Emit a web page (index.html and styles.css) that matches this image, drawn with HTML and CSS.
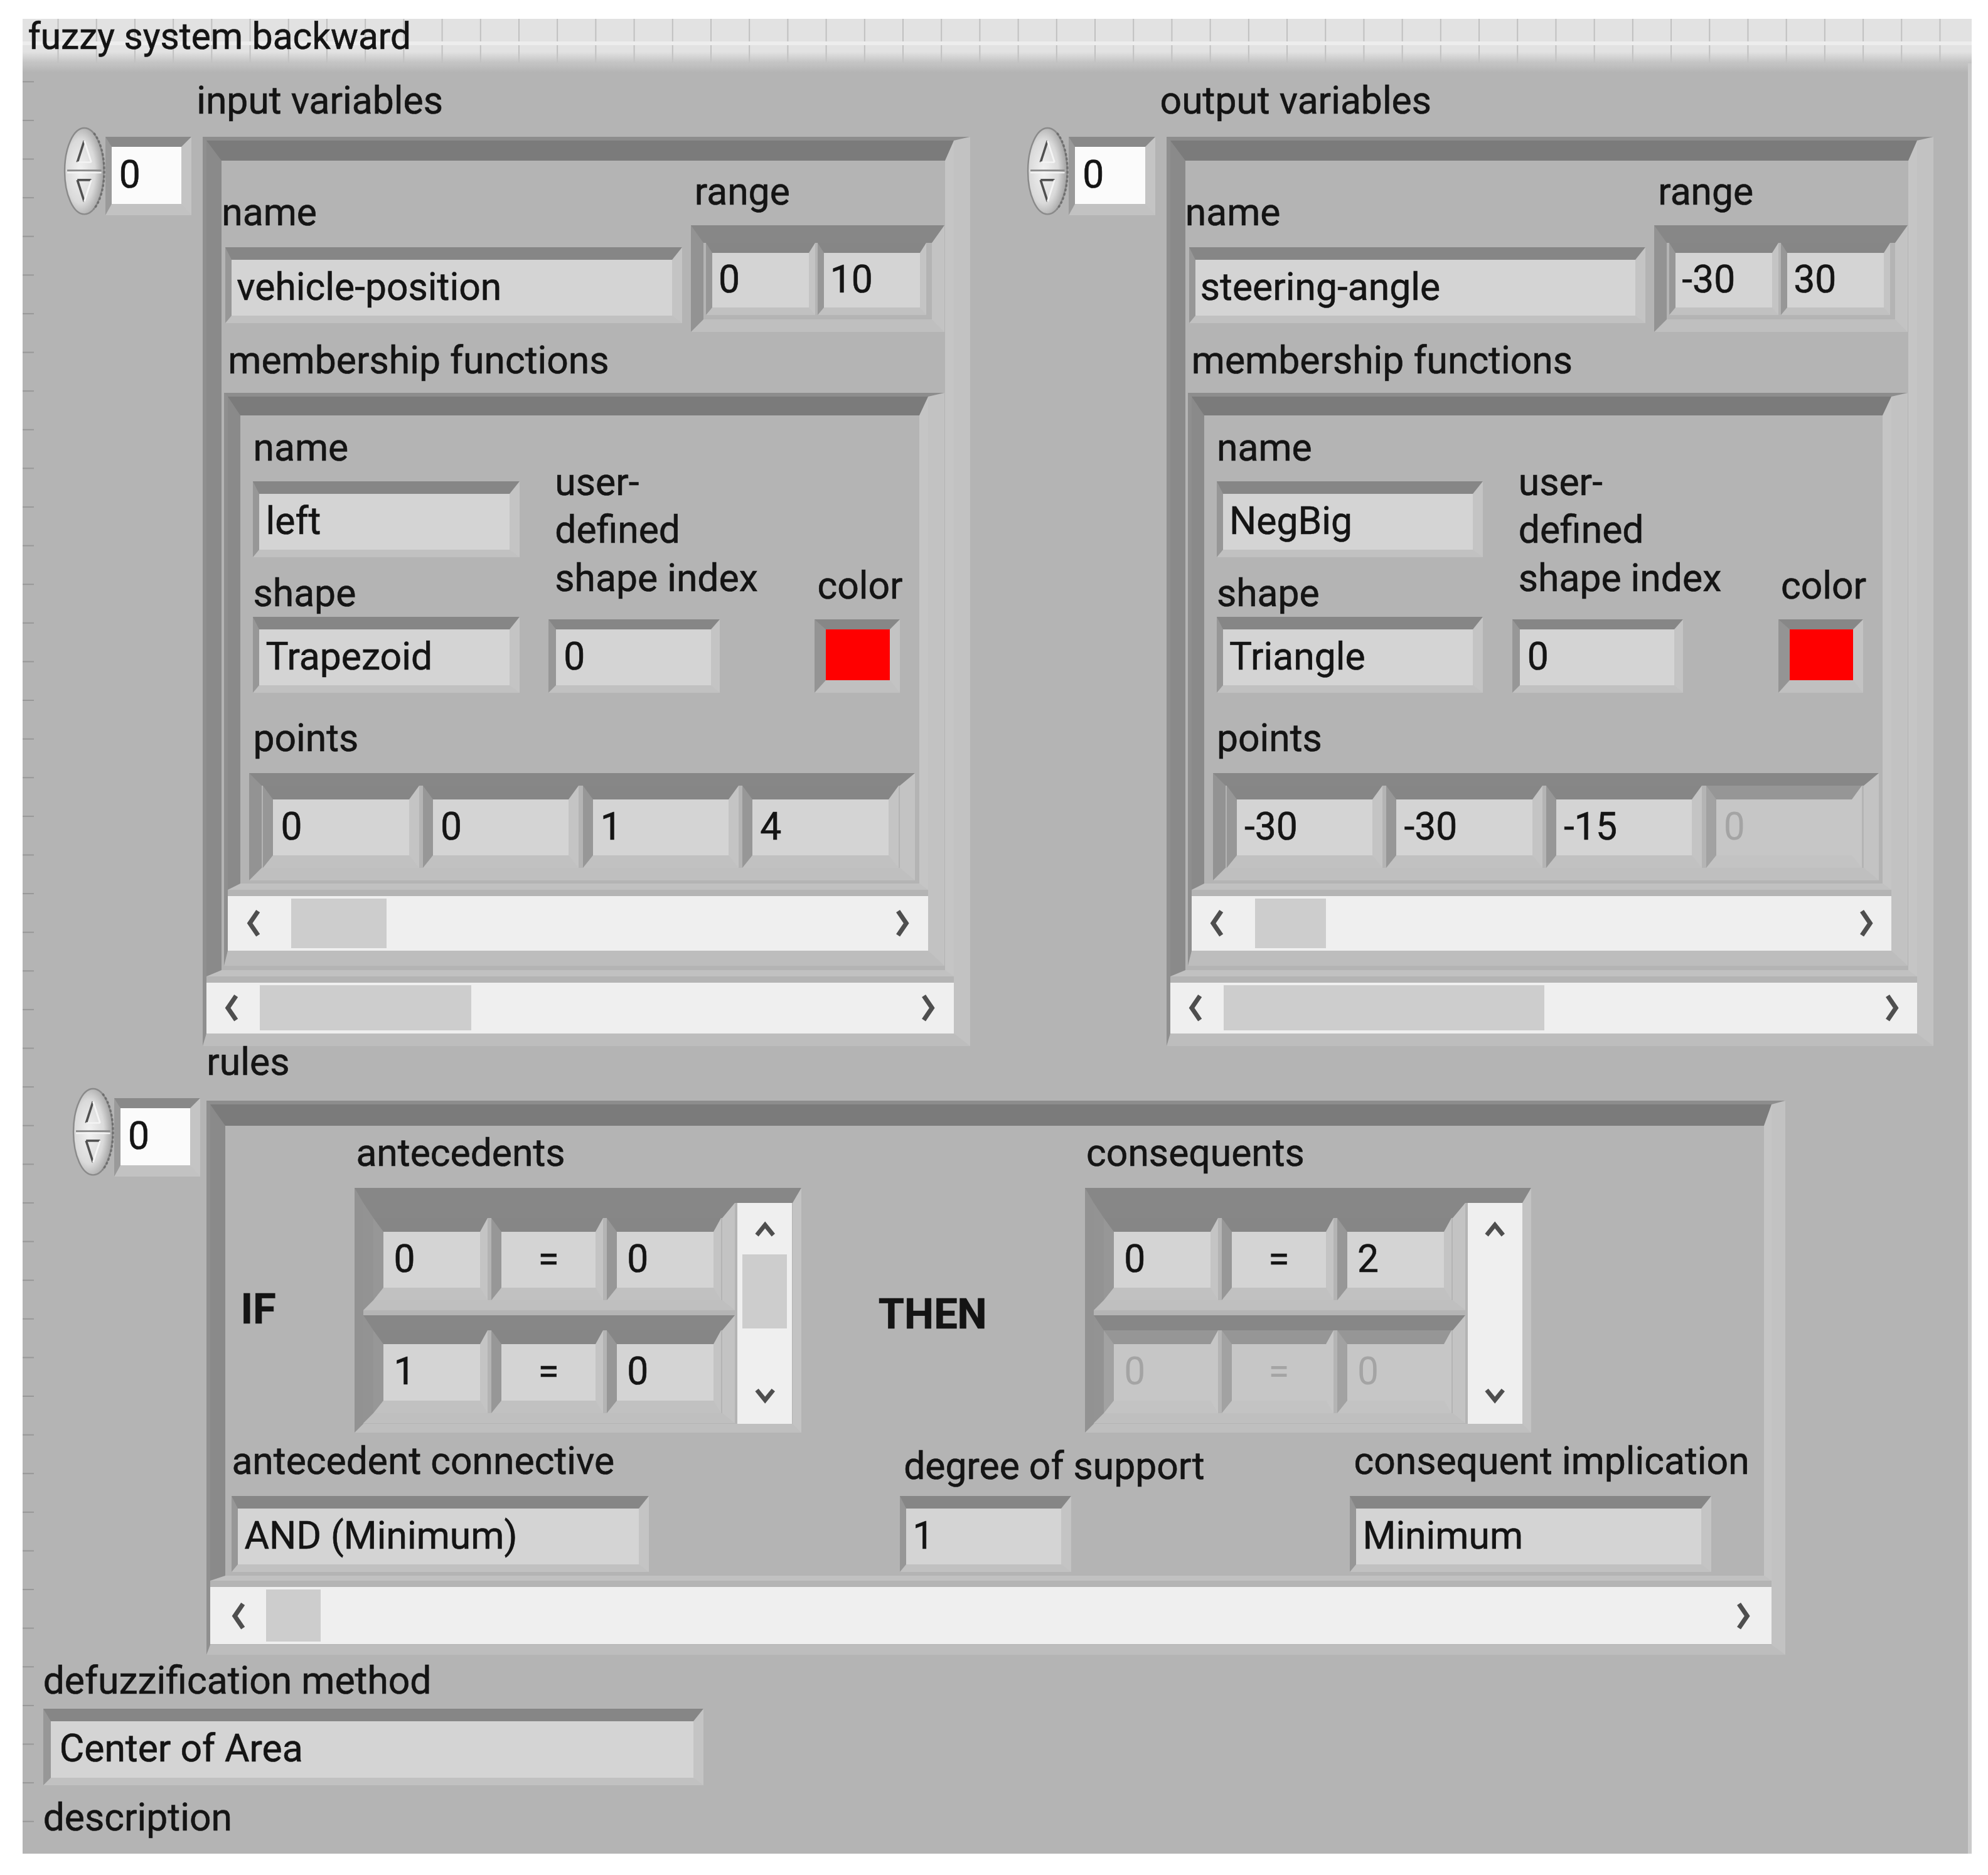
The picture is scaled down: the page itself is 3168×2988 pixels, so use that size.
FILE: index.html
```html
<!DOCTYPE html>
<html>
<head>
<meta charset="utf-8">
<title>fuzzy system backward</title>
<link rel="stylesheet" href="styles.css">
</head>
<body>
<div class="app">
 <div class="panel">
  <div class="strip"><div class="title">fuzzy system backward</div></div>
  <div class="body">
   <div class="vars">
    <!-- input variables -->
    <div class="group">
     <div class="idx">
      <svg class="spin" viewBox="0 0 33 70"><defs><radialGradient id="sg1" cx="40%" cy="50%" r="62%"><stop offset="0" stop-color="#f2f2f2"/><stop offset="0.6" stop-color="#dadada"/><stop offset="1" stop-color="#9a9a9a"/></radialGradient></defs><ellipse cx="16.5" cy="35" rx="15.5" ry="34" fill="url(#sg1)" stroke="#8a8a8a" stroke-width="1.2"/><path d="M24 5 A15.5 34 0 0 1 24 65" fill="none" stroke="#6e6e6e" stroke-width="1.6" stroke-dasharray="2 1.5"/><line x1="3" y1="34.5" x2="30" y2="34.5" stroke="#8a8a8a" stroke-width="1.4"/><line x1="3" y1="36.2" x2="30" y2="36.2" stroke="#f4f4f4" stroke-width="1"/><line x1="16.5" y1="11" x2="11" y2="28" stroke="#505050" stroke-width="1.8"/><line x1="16.5" y1="11" x2="22" y2="28" stroke="#f4f4f4" stroke-width="1.4"/><line x1="11" y1="28" x2="22" y2="28" stroke="#f4f4f4" stroke-width="1.2"/><line x1="11" y1="42" x2="22" y2="42" stroke="#505050" stroke-width="1.8"/><line x1="11" y1="42" x2="16.5" y2="59" stroke="#505050" stroke-width="1.8"/><line x1="22" y1="42" x2="16.5" y2="59" stroke="#f4f4f4" stroke-width="1.4"/></svg>
      <div class="num">0</div>
     </div>
     <div class="acol">
      <div class="lbl glbl">input variables</div>
      <div class="arr arr-var">
       <div class="elem elem-var">
        <div class="toprow">
         <div class="namecol">
          <div class="lbl lbl-name">name</div>
          <div class="sbox sbox-name">vehicle-position</div>
         </div>
         <div class="rangecol">
          <div class="lbl lbl-range">range</div>
          <div class="clus clus-range"><div class="sbox nbox-r">0</div><div class="sbox nbox-r">10</div></div>
         </div>
        </div>
        <div class="lbl lbl-mf">membership functions</div>
        <div class="arr arr-mf">
         <div class="elem elem-mf">
          <div class="mftop">
           <div class="mfcol1">
            <div class="lbl lbl-a">name</div>
            <div class="sbox sbox-mfn">left</div>
            <div class="lbl lbl-shape">shape</div>
            <div class="sbox sbox-mfn">Trapezoid</div>
           </div>
           <div class="mfcol2">
            <div class="lbl lbl-udsi">user-<br>defined<br>shape index</div>
            <div class="sbox nbox-si">0</div>
           </div>
           <div class="mfcol3">
            <div class="lbl lbl-color">color</div>
            <div class="colorbox"><div class="swatch"></div></div>
           </div>
          </div>
          <div class="lbl lbl-points">points</div>
          <div class="clus clus-points">
           <div class="sbox nbox-p">0</div><div class="sbox nbox-p">0</div><div class="sbox nbox-p">1</div><div class="sbox nbox-p">4</div>
          </div>
         </div>
         <div class="hs hs-mf">
          <svg class="chev" viewBox="0 0 14 24"><polyline points="10.5,2.5 4,12 10.5,21.5" fill="none" stroke="#4e4e4e" stroke-width="3.6"/></svg>
          <div class="thumb th-in-mf"></div><div class="sp"></div>
          <svg class="chev" viewBox="0 0 14 24"><polyline points="3.5,2.5 10,12 3.5,21.5" fill="none" stroke="#4e4e4e" stroke-width="3.6"/></svg>
         </div>
        </div>
       </div>
       <div class="hs hs-var">
        <svg class="chev" viewBox="0 0 14 24"><polyline points="10.5,2.5 4,12 10.5,21.5" fill="none" stroke="#4e4e4e" stroke-width="3.6"/></svg>
        <div class="thumb th-in-var"></div><div class="sp"></div>
        <svg class="chev" viewBox="0 0 14 24"><polyline points="3.5,2.5 10,12 3.5,21.5" fill="none" stroke="#4e4e4e" stroke-width="3.6"/></svg>
       </div>
      </div>
     </div>
    </div>
    <!-- output variables -->
    <div class="group">
     <div class="idx">
      <svg class="spin" viewBox="0 0 33 70"><defs><radialGradient id="sg2" cx="40%" cy="50%" r="62%"><stop offset="0" stop-color="#f2f2f2"/><stop offset="0.6" stop-color="#dadada"/><stop offset="1" stop-color="#9a9a9a"/></radialGradient></defs><ellipse cx="16.5" cy="35" rx="15.5" ry="34" fill="url(#sg2)" stroke="#8a8a8a" stroke-width="1.2"/><path d="M24 5 A15.5 34 0 0 1 24 65" fill="none" stroke="#6e6e6e" stroke-width="1.6" stroke-dasharray="2 1.5"/><line x1="3" y1="34.5" x2="30" y2="34.5" stroke="#8a8a8a" stroke-width="1.4"/><line x1="3" y1="36.2" x2="30" y2="36.2" stroke="#f4f4f4" stroke-width="1"/><line x1="16.5" y1="11" x2="11" y2="28" stroke="#505050" stroke-width="1.8"/><line x1="16.5" y1="11" x2="22" y2="28" stroke="#f4f4f4" stroke-width="1.4"/><line x1="11" y1="28" x2="22" y2="28" stroke="#f4f4f4" stroke-width="1.2"/><line x1="11" y1="42" x2="22" y2="42" stroke="#505050" stroke-width="1.8"/><line x1="11" y1="42" x2="16.5" y2="59" stroke="#505050" stroke-width="1.8"/><line x1="22" y1="42" x2="16.5" y2="59" stroke="#f4f4f4" stroke-width="1.4"/></svg>
      <div class="num">0</div>
     </div>
     <div class="acol">
      <div class="lbl glbl">output variables</div>
      <div class="arr arr-var">
       <div class="elem elem-var">
        <div class="toprow">
         <div class="namecol">
          <div class="lbl lbl-name">name</div>
          <div class="sbox sbox-name">steering-angle</div>
         </div>
         <div class="rangecol">
          <div class="lbl lbl-range">range</div>
          <div class="clus clus-range"><div class="sbox nbox-r">-30</div><div class="sbox nbox-r">30</div></div>
         </div>
        </div>
        <div class="lbl lbl-mf">membership functions</div>
        <div class="arr arr-mf">
         <div class="elem elem-mf">
          <div class="mftop">
           <div class="mfcol1">
            <div class="lbl lbl-a">name</div>
            <div class="sbox sbox-mfn">NegBig</div>
            <div class="lbl lbl-shape">shape</div>
            <div class="sbox sbox-mfn">Triangle</div>
           </div>
           <div class="mfcol2">
            <div class="lbl lbl-udsi">user-<br>defined<br>shape index</div>
            <div class="sbox nbox-si">0</div>
           </div>
           <div class="mfcol3">
            <div class="lbl lbl-color">color</div>
            <div class="colorbox"><div class="swatch"></div></div>
           </div>
          </div>
          <div class="lbl lbl-points">points</div>
          <div class="clus clus-points">
           <div class="sbox nbox-p">-30</div><div class="sbox nbox-p">-30</div><div class="sbox nbox-p">-15</div><div class="sbox nbox-p dis">0</div>
          </div>
         </div>
         <div class="hs hs-mf">
          <svg class="chev" viewBox="0 0 14 24"><polyline points="10.5,2.5 4,12 10.5,21.5" fill="none" stroke="#4e4e4e" stroke-width="3.6"/></svg>
          <div class="thumb th-out-mf"></div><div class="sp"></div>
          <svg class="chev" viewBox="0 0 14 24"><polyline points="3.5,2.5 10,12 3.5,21.5" fill="none" stroke="#4e4e4e" stroke-width="3.6"/></svg>
         </div>
        </div>
       </div>
       <div class="hs hs-var">
        <svg class="chev" viewBox="0 0 14 24"><polyline points="10.5,2.5 4,12 10.5,21.5" fill="none" stroke="#4e4e4e" stroke-width="3.6"/></svg>
        <div class="thumb th-out-var"></div><div class="sp"></div>
        <svg class="chev" viewBox="0 0 14 24"><polyline points="3.5,2.5 10,12 3.5,21.5" fill="none" stroke="#4e4e4e" stroke-width="3.6"/></svg>
       </div>
      </div>
     </div>
    </div>
   </div>

   <!-- rules -->
   <div class="rgroup">
    <div class="idx idx-r">
     <svg class="spin" viewBox="0 0 33 70"><defs><radialGradient id="sg3" cx="40%" cy="50%" r="62%"><stop offset="0" stop-color="#f2f2f2"/><stop offset="0.6" stop-color="#dadada"/><stop offset="1" stop-color="#9a9a9a"/></radialGradient></defs><ellipse cx="16.5" cy="35" rx="15.5" ry="34" fill="url(#sg3)" stroke="#8a8a8a" stroke-width="1.2"/><path d="M24 5 A15.5 34 0 0 1 24 65" fill="none" stroke="#6e6e6e" stroke-width="1.6" stroke-dasharray="2 1.5"/><line x1="3" y1="34.5" x2="30" y2="34.5" stroke="#8a8a8a" stroke-width="1.4"/><line x1="3" y1="36.2" x2="30" y2="36.2" stroke="#f4f4f4" stroke-width="1"/><line x1="16.5" y1="11" x2="11" y2="28" stroke="#505050" stroke-width="1.8"/><line x1="16.5" y1="11" x2="22" y2="28" stroke="#f4f4f4" stroke-width="1.4"/><line x1="11" y1="28" x2="22" y2="28" stroke="#f4f4f4" stroke-width="1.2"/><line x1="11" y1="42" x2="22" y2="42" stroke="#505050" stroke-width="1.8"/><line x1="11" y1="42" x2="16.5" y2="59" stroke="#505050" stroke-width="1.8"/><line x1="22" y1="42" x2="16.5" y2="59" stroke="#f4f4f4" stroke-width="1.4"/></svg>
     <div class="num">0</div>
    </div>
    <div class="acol-r">
     <div class="lbl">rules</div>
     <div class="arr arr-rules">
      <div class="elem elem-rules">
       <div class="rowA">
        <div class="kw kw-if">IF</div>
        <div class="ccol">
         <div class="lbl lbl-cc">antecedents</div>
         <div class="arr2">
          <div class="rows">
           <div class="clus clus-ant"><div class="sbox nb-a">0</div><div class="sbox nb-eq">=</div><div class="sbox nb-a">0</div></div>
           <div class="clus clus-ant"><div class="sbox nb-a">1</div><div class="sbox nb-eq">=</div><div class="sbox nb-a">0</div></div>
          </div>
          <div class="vs">
           <svg class="vchev" viewBox="0 0 20 14"><polyline points="3.5,11.5 10,3.5 16.5,11.5" fill="none" stroke="#4e4e4e" stroke-width="3.4"/></svg>
           <div class="vthumb"></div><div class="sp"></div>
           <svg class="vchev" viewBox="0 0 20 14"><polyline points="3.5,2.5 10,10.5 16.5,2.5" fill="none" stroke="#4e4e4e" stroke-width="3.4"/></svg>
          </div>
         </div>
        </div>
        <div class="kw kw-then">THEN</div>
        <div class="ccol">
         <div class="lbl lbl-cc">consequents</div>
         <div class="arr2">
          <div class="rows">
           <div class="clus clus-ant"><div class="sbox nb-a">0</div><div class="sbox nb-eq">=</div><div class="sbox nb-a">2</div></div>
           <div class="clus clus-ant"><div class="sbox nb-a dis">0</div><div class="sbox nb-eq dis">=</div><div class="sbox nb-a dis">0</div></div>
          </div>
          <div class="vs">
           <svg class="vchev" viewBox="0 0 20 14"><polyline points="3.5,11.5 10,3.5 16.5,11.5" fill="none" stroke="#4e4e4e" stroke-width="3.4"/></svg>
           <div class="sp"></div>
           <svg class="vchev" viewBox="0 0 20 14"><polyline points="3.5,2.5 10,10.5 16.5,2.5" fill="none" stroke="#4e4e4e" stroke-width="3.4"/></svg>
          </div>
         </div>
        </div>
       </div>
       <div class="rowB">
        <div class="bcol">
         <div class="lbl">antecedent connective</div>
         <div class="sbox sb-conn">AND (Minimum)</div>
        </div>
        <div class="bcol">
         <div class="lbl lbl-dos">degree of support</div>
         <div class="sbox sb-dos">1</div>
        </div>
        <div class="bcol">
         <div class="lbl lbl-ci">consequent implication</div>
         <div class="sbox sb-ci">Minimum</div>
        </div>
       </div>
      </div>
      <div class="hs hs-rules">
       <svg class="chev" viewBox="0 0 14 24"><polyline points="10.5,2.5 4,12 10.5,21.5" fill="none" stroke="#4e4e4e" stroke-width="3.6"/></svg>
       <div class="thumb th-rules"></div><div class="sp"></div>
       <svg class="chev" viewBox="0 0 14 24"><polyline points="3.5,2.5 10,12 3.5,21.5" fill="none" stroke="#4e4e4e" stroke-width="3.6"/></svg>
      </div>
     </div>
    </div>
   </div>

   <div class="lbl lbl-defuzz">defuzzification method</div>
   <div class="sbox sb-defuzz">Center of Area</div>
   <div class="lbl lbl-desc">description</div>
  </div>
 </div>
</div>
</body>
</html>
```
FILE: styles.css
```css
html, body {
  margin: 0;
  padding: 0;
  background: #ffffff;
}

.app {
  zoom: 2.0204;
  width: 1568px;
  height: 1479px;
  overflow: hidden;
  font-family: Roboto, "Open Sans", "Liberation Sans", sans-serif;
  font-size: 30px;
  color: #141414;
  -webkit-text-stroke: 0.3px #141414;
}

.panel {
  margin: 15px 0 0 18px;
  width: 1537px;
  height: 1447px;
  display: flex;
  flex-direction: column;
}

/* grid strip with the cluster caption */
.strip {
  flex: none;
  height: 35px;
  background-color: #e2e2e2;
  background-image:
    linear-gradient(to bottom, rgba(196,196,196,0) 26px, #c2c2c2 35px),
    linear-gradient(to bottom, rgba(0,0,0,0) 18px, #ededed 18px, #ededed 21px, rgba(0,0,0,0) 21px),
    linear-gradient(to right, #c0c0c0 1px, rgba(0,0,0,0) 1px);
  background-size: 100% 100%, 100% 100%, 30.3px 100%;
  background-position: 0 0, 0 0, 27.5px 0;
}

.title {
  margin: 0 0 0 4px;
  line-height: 28px;
  font-size: 29px;
  white-space: nowrap;
}

.body {
  flex: 1;
  background-color: #b4b4b4;
  background-image:
    linear-gradient(to bottom, #989898 1px, rgba(0,0,0,0) 1px),
    linear-gradient(to bottom, #c4c4c4, rgba(180,180,180,0) 7px);
  background-size: 9px 30.5px, 100% 100%;
  background-repeat: repeat-y, no-repeat;
  background-position: 0 14px, 0 0;
  border-right: 3px solid #cbcbcb;
}

.lbl {
  line-height: 36px;
  white-space: nowrap;
}

/* generic recessed boxes */
.sbox {
  box-sizing: border-box;
  border-style: solid;
  border-color: #868686 #c4c4c4 #c1c1c1 #979797;
  background: #d4d4d4;
  white-space: nowrap;
  overflow: hidden;
}

.clus {
  box-sizing: border-box;
  border-style: solid;
  border-color: #878787 #c3c3c3 #bfbfbf #939393;
  display: flex;
  align-items: flex-start;
}

.arr {
  box-sizing: border-box;
  border-style: solid;
  border-color: #8d8d8d #c2c2c2 #bdbdbd #8f8f8f;
  display: flex;
  flex-direction: column;
}

.elem {
  flex: none;
  box-sizing: border-box;
  border-style: solid;
  border-color: #7b7b7b #c5c5c5 #c1c1c1 #8a8a8a;
}

.dis {
  background: #c6c6c6;
  color: #a4a4a4;
  -webkit-text-stroke: 0;
  border-color: #969696 #c6c6c6 #c3c3c3 #a2a2a2;
}

/* scrollbars */
.hs {
  flex: none;
  box-sizing: border-box;
  margin-top: 5px;
  background: #efefef;
  display: flex;
  align-items: center;
  padding: 2px 13px;
}
.hs-var { height: 40px; }
.hs-mf { height: 43px; }
.hs-rules { height: 45px; padding: 2px 15px; }

.chev {
  flex: none;
  width: 14px;
  height: 24px;
}

.thumb {
  flex: none;
  align-self: stretch;
  background: #cdcdcd;
}
.th-in-var { margin-left: 15px; width: 167px; }
.th-out-var { margin-left: 15px; width: 253px; }
.th-in-mf { margin-left: 23px; width: 75px; }
.th-out-mf { margin-left: 23px; width: 56px; }
.th-rules { margin-left: 15px; width: 43px; }

.sp { flex: 1; }

/* variables row */
.vars {
  display: flex;
  gap: 45px;
  padding: 12px 0 0 32px;
}

.group { display: flex; }

.idx {
  flex: none;
  width: 110px;
  margin-top: 38px;
  display: flex;
  align-items: flex-start;
}

.spin {
  flex: none;
  display: block;
  width: 33px;
  height: 70px;
}

.num {
  box-sizing: border-box;
  width: 68px;
  height: 62px;
  margin-top: 8px;
  border-style: solid;
  border-width: 8px 8px 9px 5px;
  border-color: #898989 #c4c4c4 #c2c2c2 #9a9a9a;
  background: #fbfbfb;
  line-height: 45px;
  padding-left: 6px;
}

.acol { width: 605px; }
.glbl { margin-left: -5px; }

.arr-var {
  width: 605px;
  height: 717px;
  margin-top: 10px;
  border-width: 3px 13px 10px 3px;
}
.elem-var {
  height: 659px;
  border-width: 16px 7px 5px 12px;
}

.toprow { display: flex; }
.namecol { margin-left: 3px; width: 360px; }
.lbl-name { margin: 23px 0 0 -3px; }
.sbox-name {
  margin-top: 9px;
  width: 360px;
  height: 60px;
  border-width: 10px 8px 6px 5px;
  line-height: 44px;
  padding-left: 4px;
}

.rangecol { margin-left: 7px; width: 200px; }
.lbl-range { margin: 7px 0 0 3px; }
.clus-range {
  margin-top: 8px;
  width: 200px;
  height: 84px;
  border-width: 14px 10px 10px 10px;
  gap: 2px;
  padding-left: 2px;
}
.nbox-r {
  width: 86px;
  height: 57px;
  border-width: 8px 5px 6px 5px;
  line-height: 43px;
  padding-left: 5px;
}

.lbl-mf { margin: 5px 0 0 5px; }

.arr-mf {
  margin: 7px 0 0 2px;
  width: 568px;
  height: 452px;
  border-width: 3px 13px 12px 3px;
}
.elem-mf {
  height: 389px;
  border-width: 15px 7px 5px 10px;
}

.mftop {
  display: flex;
  align-items: flex-end;
  margin-left: 10px;
}
.mfcol1 { width: 210px; }
.lbl-a { margin-top: 8px; }
.lbl-shape { margin-top: 11px; }
.sbox-mfn {
  margin-top: 8px;
  width: 210px;
  height: 60px;
  border-width: 10px 8px 6px 5px;
  line-height: 44px;
  padding-left: 5px;
}
.lbl-shape + .sbox-mfn { margin-top: 0; }

.mfcol2 {
  margin-left: 23px;
  width: 135px;
  display: flex;
  flex-direction: column;
}
.lbl-udsi {
  line-height: 38px;
  margin: 0 0 13px 5px;
}
.nbox-si {
  width: 135px;
  height: 58px;
  border-width: 8px 7px 6px 6px;
  line-height: 44px;
  padding-left: 6px;
}

.mfcol3 {
  margin-left: 75px;
  width: 67px;
  display: flex;
  flex-direction: column;
}
.lbl-color { margin: 0 0 8px 2px; }
.colorbox {
  box-sizing: border-box;
  width: 67px;
  height: 58px;
  border-style: solid;
  border-width: 8px 8px 10px 9px;
  border-color: #878787 #c3c3c3 #c0c0c0 #949494;
}
.swatch {
  width: 100%;
  height: 100%;
  background: #ff0000;
}

.lbl-points { margin: 18px 0 0 10px; }
.clus-points {
  margin: 9px 0 0 7px;
  width: 525px;
  height: 85px;
  border-width: 10px 12px 10px 10px;
  gap: 3px;
  padding-left: 1px;
}
.nbox-p {
  width: 123px;
  height: 65px;
  border-width: 11px 8px 10px 8px;
  line-height: 44px;
  padding-left: 6px;
}

/* rules */
.rgroup {
  display: flex;
  margin: -5px 0 0 39px;
}
.idx-r { width: 106px; }

.arr-rules {
  margin-top: 12px;
  width: 1245px;
  height: 437px;
  border-width: 3px 11px 8px 3px;
}
.elem-rules {
  height: 376px;
  border-width: 17px 6px 4px 12px;
}

.rowA { display: flex; }

.kw {
  flex: none;
  font-weight: 700;
  font-size: 33px;
  line-height: 40px;
}
.kw-if { width: 90px; padding-left: 12px; margin-top: 125px; }
.kw-then { width: 163px; padding-left: 61px; margin-top: 129px; }

.ccol { width: 352px; flex: none; }
.lbl-cc { margin: 4px 0 0 1px; }

.arr2 {
  box-sizing: border-box;
  margin-top: 9px;
  width: 352px;
  height: 193px;
  border-style: solid;
  border-width: 12px 7px 7px 7px;
  border-color: #878787 #c3c3c3 #bfbfbf #929292;
  display: flex;
  gap: 2px;
}
.rows {
  width: 293px;
  display: flex;
  flex-direction: column;
  gap: 4px;
}
.clus-ant {
  width: 293px;
  height: 85px;
  border-width: 12px 10px 8px 8px;
  gap: 3px;
}
.nb-a {
  width: 90px;
  height: 65px;
  border-width: 11px 6px 10px 8px;
  line-height: 44px;
  padding-left: 8px;
}
.nb-eq {
  width: 88px;
  height: 65px;
  border-width: 11px 6px 10px 8px;
  line-height: 44px;
  text-align: center;
}

.vs {
  flex: none;
  width: 43px;
  box-sizing: border-box;
  background: #efefef;
  display: flex;
  flex-direction: column;
  align-items: center;
  padding: 14px 0 15px;
}
.vchev {
  flex: none;
  width: 20px;
  height: 14px;
}
.vthumb {
  flex: none;
  margin-top: 13px;
  width: 35px;
  height: 58px;
  background: #cdcdcd;
}

.rowB {
  display: grid;
  grid-template-columns: 527px 355px 1fr;
  margin-left: 5px;
}
.bcol .lbl { margin-top: 5px; }
.lbl-dos, .lbl-ci { margin-left: 3px; }
.bcol .lbl-dos { margin-top: 9px; margin-bottom: -4px; }
.bcol .sbox {
  margin-top: 9px;
  height: 60px;
  border-width: 10px 8px 6px 5px;
  line-height: 44px;
  padding-left: 5px;
}
.sb-conn { width: 329px; }
.sb-dos { width: 135px; }
.sb-ci { width: 285px; }

/* defuzzification */
.lbl-defuzz { margin: 3px 0 0 16px; }
.sb-defuzz {
  margin: 4px 0 0 16px;
  width: 521px;
  height: 60px;
  border-width: 10px 8px 6px 6px;
  line-height: 44px;
  padding-left: 7px;
}
.lbl-desc { margin: 8px 0 0 16px; }
```
